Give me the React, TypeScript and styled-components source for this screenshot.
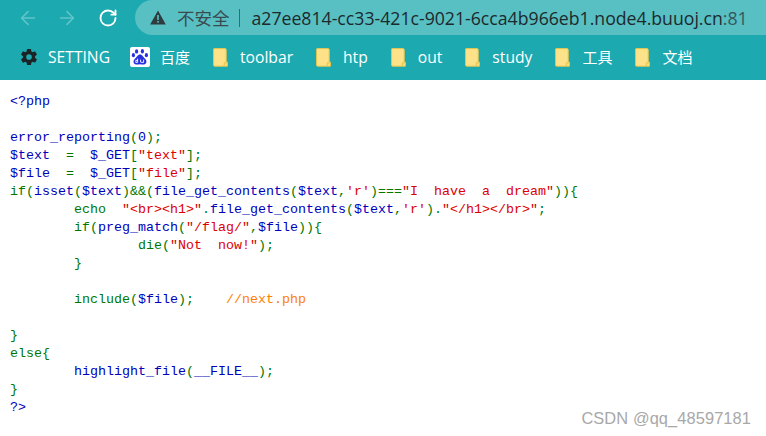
import React from 'react';
import styled, { createGlobalStyle } from 'styled-components';
import { ArrowLeft, ArrowRight, RotateCw } from 'lucide-react';
import { IoSettingsSharp } from 'react-icons/io5';

const GlobalStyle = createGlobalStyle`
  html, body {
    margin: 0;
    padding: 0;
    background: #fff;
    overflow: hidden;
  }
`;

const Page = styled.div`
  width: 766px;
  height: 436px;
  position: relative;
  overflow: hidden;
  display: flex;
  flex-direction: column;
`;

const Chrome = styled.header`
  background: #1ca9b0;
  height: 80px;
  display: flex;
  flex-direction: column;
  flex-shrink: 0;
`;

const TopRow = styled.div`
  height: 35px;
  display: flex;
  align-items: center;
`;

const NavButtons = styled.div`
  width: 135px;
  display: flex;
  align-items: center;
  gap: 17px;
  padding-left: 17px;
  box-sizing: border-box;
  flex-shrink: 0;
`;

const NavButton = styled.span<{ $dim?: boolean; $reload?: boolean }>`
  display: flex;
  margin-left: ${({ $reload }) => ($reload ? '3px' : '0')};
  color: ${({ $dim }) => ($dim ? '#62c4c8' : '#ffffff')};
`;

const AddressBar = styled.div`
  flex: 1;
  height: 35px;
  background: #58bfc3;
  border-radius: 18px 0 0 18px;
  display: flex;
  align-items: center;
  padding-left: 15px;
  font-family: 'Noto Sans CJK SC', 'Noto Sans', sans-serif;
  font-size: 17.5px;
  white-space: nowrap;
  overflow: hidden;
`;

const Insecure = styled.span`
  color: #3a4a4d;
  margin-left: 11px;
`;

const Divider = styled.span`
  width: 1px;
  height: 18px;
  background: #3d6a6e;
  margin: 0 12px 0 9px;
`;

const Url = styled.span`
  font-family: 'Open Sans', 'Noto Sans', sans-serif;
  font-size: 17.68px;
  color: #1d2a2d;
`;

const Port = styled.span`
  color: #35575c;
`;

const Bookmarks = styled.nav`
  height: 45px;
  display: flex;
  align-items: center;
  padding: 0 0 1px 20px;
  box-sizing: border-box;
`;

const Bookmark = styled.div<{ $gap?: number; $after?: number }>`
  display: flex;
  align-items: center;
  gap: ${({ $gap }) => $gap ?? 12}px;
  margin-right: ${({ $after }) => $after ?? 23}px;
  color: #fff;
  font-family: 'Open Sans', 'Noto Sans CJK SC', sans-serif;
  line-height: 20px;
  white-space: nowrap;
`;

const BookmarkLabel = styled.span<{ $cjk?: boolean }>`
  font-size: ${({ $cjk }) => ($cjk ? '15px' : '15.65px')};
`;

const Gear = styled.span`
  display: flex;
  color: #1c2326;
`;

const Code = styled.main`
  flex: 1;
  background: #fff;
  padding: 13px 0 0 10px;
  font-family: 'Liberation Mono', monospace;
  font-size: 13.33px;
  line-height: 18px;
  white-space: pre;
  tab-size: 8;
`;

const Line = styled.div`
  height: 18px;
`;

const tokenColors = { b: '#0000bb', g: '#007700', r: '#dd0000', o: '#ff8000' };

const Token = styled.span<{ $kind: keyof typeof tokenColors }>`
  color: ${({ $kind }) => tokenColors[$kind]};
`;

const Watermark = styled.div`
  position: absolute;
  right: 15px;
  top: 409px;
  font-family: 'Liberation Sans', sans-serif;
  font-size: 16.4px;
  line-height: 18px;
  color: #a8a8a8;
  letter-spacing: 0.1px;
`;

const sp = '\u00a0\u00a0';

const lines: [keyof typeof tokenColors, string][][] = [
  [['b', '<?php']],
  [],
  [['b', 'error_reporting'], ['g', '('], ['b', '0'], ['g', ');']],
  [['b', '$text'], ['g', `${sp}=${sp}`], ['b', '$_GET'], ['g', '['], ['r', '"text"'], ['g', '];']],
  [['b', '$file'], ['g', `${sp}=${sp}`], ['b', '$_GET'], ['g', '['], ['r', '"file"'], ['g', '];']],
  [['g', 'if('], ['b', 'isset'], ['g', '('], ['b', '$text'], ['g', ')&&('], ['b', 'file_get_contents'], ['g', '('], ['b', '$text'], ['g', ','], ['r', "'r'"], ['g', ')==='], ['r', `"I${sp}have${sp}a${sp}dream"`], ['g', ')){']],
  [['g', `\techo${sp}`], ['r', '"<br><h1>"'], ['g', '.'], ['b', 'file_get_contents'], ['g', '('], ['b', '$text'], ['g', ','], ['r', "'r'"], ['g', ').'], ['r', '"</h1></br>"'], ['g', ';']],
  [['g', '\tif('], ['b', 'preg_match'], ['g', '('], ['r', '"/flag/"'], ['g', ','], ['b', '$file'], ['g', ')){']],
  [['g', '\t\tdie('], ['r', `"Not${sp}now!"`], ['g', ');']],
  [['g', '\t}']],
  [],
  [['g', '\tinclude('], ['b', '$file'], ['g', ');'], ['o', `${sp}${sp}//next.php`]],
  [],
  [['g', '}']],
  [['g', 'else{']],
  [['g', '\t'], ['b', 'highlight_file'], ['g', '('], ['b', '__FILE__'], ['g', ');']],
  [['g', '}']],
  [['b', '?>']],
];

const folders = [
  { name: 'toolbar' },
  { name: 'htp' },
  { name: 'out' },
  { name: 'study' },
  { name: '工具', cjk: true },
  { name: '文档', cjk: true },
];

const WarningIcon = () => (
  <svg width="16" height="15" viewBox="0 0 16 15">
    <path d="M8 0.5 L15.8 14.5 L0.2 14.5 Z" fill="#2e3c40" />
    <rect x="7.2" y="5" width="1.6" height="5" fill="#58bfc3" />
    <rect x="7.2" y="11" width="1.6" height="1.7" fill="#58bfc3" />
  </svg>
);

const BaiduIcon = () => (
  <svg width="20" height="20" viewBox="0 0 20 20">
    <rect width="20" height="20" rx="2" fill="#ffffff" />
    <g fill="#2932e1">
      <ellipse cx="6.6" cy="4.4" rx="1.6" ry="2.2" />
      <ellipse cx="12.4" cy="4.2" rx="1.6" ry="2.2" />
      <ellipse cx="3.4" cy="8.2" rx="1.6" ry="2.1" />
      <ellipse cx="16.4" cy="8.2" rx="1.6" ry="2.1" />
      <path d="M10 7.6 C7.6 7.6 7.2 10 5.2 11.4 C3 13 2.8 16.6 5.8 17.4 C7.6 17.8 8.6 17.2 10 17.2 C11.4 17.2 12.6 17.8 14.2 17.4 C17.2 16.6 17 13 14.8 11.4 C12.8 10 12.4 7.6 10 7.6 Z" />
    </g>
    <path d="M7.6 11.6 V15.4 H5.8 V13.4 H7.6 M10.6 12.6 V15 Q10.6 15.4 11.4 15.4 H13.6 V12.6" fill="none" stroke="#ffffff" strokeWidth="0.9" />
  </svg>
);

const FolderIcon = () => (
  <svg width="15" height="19" viewBox="0 0 15 19">
    <path d="M1 0.6 H12 Q13.2 0.6 13.2 2 V14 H14.4 V18.2 H1.6 Q0.6 18.2 0.6 17 V1.6 Q0.6 0.6 1 0.6 Z" fill="#fde28a" stroke="#e6c64e" strokeWidth="1" />
    <path d="M11.2 18 V14.8 H14" fill="#f6d76a" stroke="#e6c64e" strokeWidth="1" />
  </svg>
);

const App: React.FC = () => (
  <Page>
    <GlobalStyle />
    <Chrome>
      <TopRow>
        <NavButtons>
          <NavButton $dim><ArrowLeft size={22} strokeWidth={1.7} /></NavButton>
          <NavButton $dim><ArrowRight size={22} strokeWidth={1.7} /></NavButton>
          <NavButton $reload><RotateCw size={20} strokeWidth={2.2} /></NavButton>
        </NavButtons>
        <AddressBar>
          <WarningIcon />
          <Insecure>不安全</Insecure>
          <Divider />
          <Url>a27ee814-cc33-421c-9021-6cca4b966eb1.node4.buuoj.cn<Port>:81</Port></Url>
        </AddressBar>
      </TopRow>
      <Bookmarks>
        <Bookmark $gap={10} $after={20}>
          <Gear><IoSettingsSharp size={18} /></Gear>
          <BookmarkLabel>SETTING</BookmarkLabel>
        </Bookmark>
        <Bookmark $gap={10}>
          <BaiduIcon />
          <BookmarkLabel $cjk>百度</BookmarkLabel>
        </Bookmark>
        {folders.map(({ name, cjk }) => (
          <Bookmark key={name}>
            <FolderIcon />
            <BookmarkLabel $cjk={cjk}>{name}</BookmarkLabel>
          </Bookmark>
        ))}
      </Bookmarks>
    </Chrome>
    <Code>
      {lines.map((tokens, i) => (
        <Line key={i}>
          {tokens.map(([kind, text], j) => (
            <Token key={j} $kind={kind}>{text}</Token>
          ))}
        </Line>
      ))}
    </Code>
    <Watermark>CSDN @qq_48597181</Watermark>
  </Page>
);

export default App;
